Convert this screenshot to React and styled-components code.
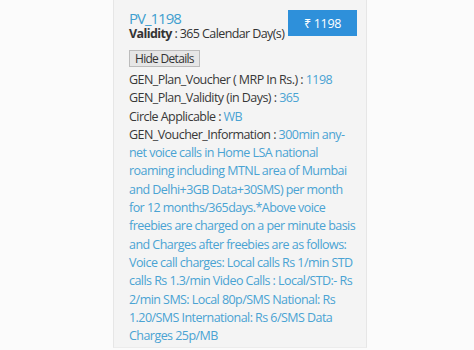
import React from "react";
import styled, { createGlobalStyle } from "styled-components";

const Global = createGlobalStyle`
  html, body {
    margin: 0;
    padding: 0;
    background: #fbfbfb;
    font-family: "Open Sans", "Noto Sans", sans-serif;
  }
`;

const Page = styled.div`
  width: 474px;
  height: 350px;
  overflow: hidden;
  display: flex;
  padding-left: 113px;
  box-sizing: border-box;
`;

const Card = styled.div`
  width: 254px;
  height: 348px;
  box-sizing: border-box;
  background: #f4f4f4;
  border-left: 1px solid #e6e6e6;
  border-right: 1px solid #e6e6e6;
  border-bottom: 1px solid #ececec;
  padding: 10px 9px 0 15px;
`;

const Top = styled.div`
  display: flex;
  justify-content: space-between;
  align-items: flex-start;
`;

const Title = styled.div`
  color: #3f9fcf;
  font-size: 15px;
  line-height: 16px;
  letter-spacing: -1px;
`;

const Validity = styled.div`
  color: #333;
  font-size: 12.5px;
  line-height: 15px;
  letter-spacing: -0.6px;
  white-space: nowrap;
  b {
    font-weight: 700;
  }
`;

const PriceButton = styled.div`
  width: 69px;
  height: 26px;
  background: #2e90da;
  color: #fff;
  font-size: 12.5px;
  letter-spacing: -0.3px;
  display: flex;
  align-items: center;
  justify-content: center;
`;

const HideButton = styled.div`
  display: inline-block;
  margin-top: 9px;
  padding: 0 5px;
  height: 15px;
  line-height: 15px;
  font-size: 12px;
  letter-spacing: -0.7px;
  color: #333;
  background: #e6e6e6;
  border: 1px solid #bcbcbc;
`;

const Details = styled.div`
  margin-top: 3px;
  font-size: 12.5px;
  line-height: 18.3px;
  letter-spacing: -0.55px;
  color: #383838;
  width: 228px;
`;

const Row = styled.div``;

const Value = styled.span`
  color: #4aa3d3;
`;

export default function App() {
  return (
    <Page>
      <Global />
      <Card>
        <Top>
          <div>
            <Title>PV_1198</Title>
            <Validity>
              <b>Validity</b> : 365 Calendar Day(s)
            </Validity>
          </div>
          <PriceButton>₹ 1198</PriceButton>
        </Top>
        <HideButton>Hide Details</HideButton>
        <Details>
          <Row>
            GEN_Plan_Voucher ( MRP In Rs.) : <Value>1198</Value>
          </Row>
          <Row>
            GEN_Plan_Validity (in Days) : <Value>365</Value>
          </Row>
          <Row>
            Circle Applicable : <Value>WB</Value>
          </Row>
          <Row>
            GEN_Voucher_Information :{" "}
            <Value>
              300min any-net voice calls in Home LSA national roaming including
              MTNL area of Mumbai and Delhi+3GB Data+30SMS) per month for 12
              months/365days.*Above voice freebies are charged on a per minute
              basis and Charges after freebies are as follows: Voice call
              charges: Local calls Rs 1/min STD calls Rs 1.3/min Video Calls :
              Local/STD:- Rs 2/min SMS: Local 80p/SMS National: Rs 1.20/SMS
              International: Rs 6/SMS Data Charges 25p/MB
            </Value>
          </Row>
        </Details>
      </Card>
    </Page>
  );
}
